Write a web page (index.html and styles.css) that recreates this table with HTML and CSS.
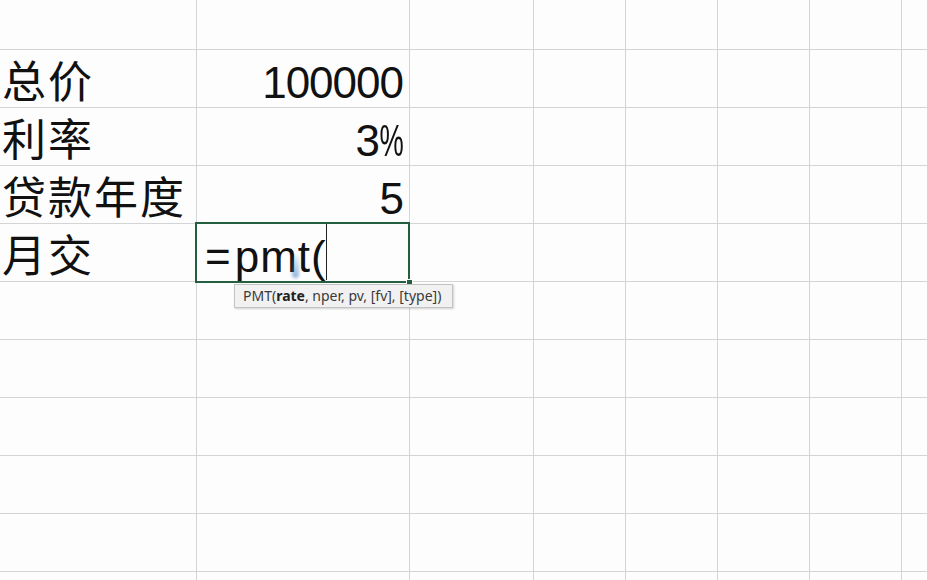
FILE: index.html
```html
<!DOCTYPE html>
<html lang="zh-CN">
<head>
<meta charset="utf-8">
<title>PMT</title>
<link rel="stylesheet" href="styles.css">
</head>
<body>
<div class="sheet">
  <div class="row first">
    <div class="cell"></div><div class="cell"></div><div class="cell"></div><div class="cell"></div><div class="cell"></div><div class="cell"></div><div class="cell"></div><div class="cell"></div>
  </div>
  <div class="row">
    <div class="cell label">总价</div><div class="cell num">100000</div><div class="cell"></div><div class="cell"></div><div class="cell"></div><div class="cell"></div><div class="cell"></div><div class="cell"></div>
  </div>
  <div class="row">
    <div class="cell label">利率</div><div class="cell num">3<span class="pct">%</span></div><div class="cell"></div><div class="cell"></div><div class="cell"></div><div class="cell"></div><div class="cell"></div><div class="cell"></div>
  </div>
  <div class="row">
    <div class="cell label">贷款年度</div><div class="cell num">5</div><div class="cell"></div><div class="cell"></div><div class="cell"></div><div class="cell"></div><div class="cell"></div><div class="cell"></div>
  </div>
  <div class="row">
    <div class="cell label">月交</div><div class="cell formula"><span class="ftext"><span class="eq">=</span>pmt(</span><span class="caret"></span></div><div class="cell"></div><div class="cell"></div><div class="cell"></div><div class="cell"></div><div class="cell"></div><div class="cell"></div>
  </div>
  <div class="row">
    <div class="cell"></div><div class="cell"></div><div class="cell"></div><div class="cell"></div><div class="cell"></div><div class="cell"></div><div class="cell"></div><div class="cell"></div>
  </div>
  <div class="row">
    <div class="cell"></div><div class="cell"></div><div class="cell"></div><div class="cell"></div><div class="cell"></div><div class="cell"></div><div class="cell"></div><div class="cell"></div>
  </div>
  <div class="row">
    <div class="cell"></div><div class="cell"></div><div class="cell"></div><div class="cell"></div><div class="cell"></div><div class="cell"></div><div class="cell"></div><div class="cell"></div>
  </div>
  <div class="row">
    <div class="cell"></div><div class="cell"></div><div class="cell"></div><div class="cell"></div><div class="cell"></div><div class="cell"></div><div class="cell"></div><div class="cell"></div>
  </div>
  <div class="row">
    <div class="cell"></div><div class="cell"></div><div class="cell"></div><div class="cell"></div><div class="cell"></div><div class="cell"></div><div class="cell"></div><div class="cell"></div>
  </div>
  <div class="row">
    <div class="cell"></div><div class="cell"></div><div class="cell"></div><div class="cell"></div><div class="cell"></div><div class="cell"></div><div class="cell"></div><div class="cell"></div>
  </div>

  <div class="selection"><span class="handle"></span></div>
  <div class="smudge"></div>
  <div class="tooltip">PMT(<b>rate</b>, nper, pv, [fv], [type])</div>
</div>
</body>
</html>
```
FILE: styles.css
```css
html, body {
  margin: 0;
  padding: 0;
  background: #fdfdfd;
  overflow: hidden;
}

.sheet {
  position: relative;
  width: 928px;
  height: 580px;
  overflow: hidden;
}

.row {
  display: grid;
  grid-template-columns: 197px 213px 124px 92px 92px 92px 92px 1fr;
  height: 58px;
}

.row.first {
  height: 50px;
}

.cell {
  box-sizing: border-box;
  border-right: 1px solid #d4d4d4;
  border-bottom: 1px solid #d4d4d4;
  white-space: nowrap;
  color: #111;
}

.label {
  font-family: "Noto Sans CJK SC", "Noto Sans CJK JP", sans-serif;
  font-size: 44px;
  line-height: 44px;
  letter-spacing: 2px;
  padding: 7px 0 0 2px;
}

.num {
  font-family: "Liberation Sans", Arial, sans-serif;
  font-size: 44px;
  line-height: 44px;
  letter-spacing: -1px;
  text-align: right;
  padding: 11px 6px 0 0;
}

.pct {
  display: inline-block;
  transform: scaleX(0.62);
  transform-origin: right center;
  margin-left: -14px;
}

.formula {
  display: flex;
  align-items: flex-start;
  padding-left: 8px;
}

.ftext {
  font-family: "Liberation Sans", Arial, sans-serif;
  font-size: 44px;
  line-height: 44px;
  letter-spacing: 1px;
  padding-top: 11px;
}

.eq {
  margin-right: 3px;
}

.caret {
  width: 1px;
  height: 56px;
  margin-left: -1px;
  background: #222;
}

.selection {
  position: absolute;
  left: 195px;
  top: 222px;
  width: 215px;
  height: 61px;
  box-sizing: border-box;
  border: 2px solid #24603f;
}

.handle {
  position: absolute;
  right: -5px;
  bottom: -5px;
  width: 5px;
  height: 5px;
  background: #24603f;
  border: 1px solid #fdfdfd;
}

.smudge {
  position: absolute;
  left: 292px;
  top: 255px;
  width: 7px;
  height: 23px;
  border-radius: 4px;
  background: linear-gradient(rgba(90, 150, 215, 0.1), rgba(70, 130, 200, 0.6));
  filter: blur(1.5px);
}

.tooltip {
  position: absolute;
  left: 234px;
  top: 284px;
  width: 219px;
  height: 24px;
  box-sizing: border-box;
  padding: 0 0 0 8px;
  background: #f1f1f1;
  border: 1px solid #c3c3c3;
  box-shadow: 1px 1px 2px rgba(0, 0, 0, 0.18);
  font-family: "Noto Sans", "Open Sans", sans-serif;
  font-size: 14px;
  line-height: 22px;
  color: #3a3a3a;
  white-space: nowrap;
}

.tooltip b {
  font-weight: 700;
  color: #222;
}
```
